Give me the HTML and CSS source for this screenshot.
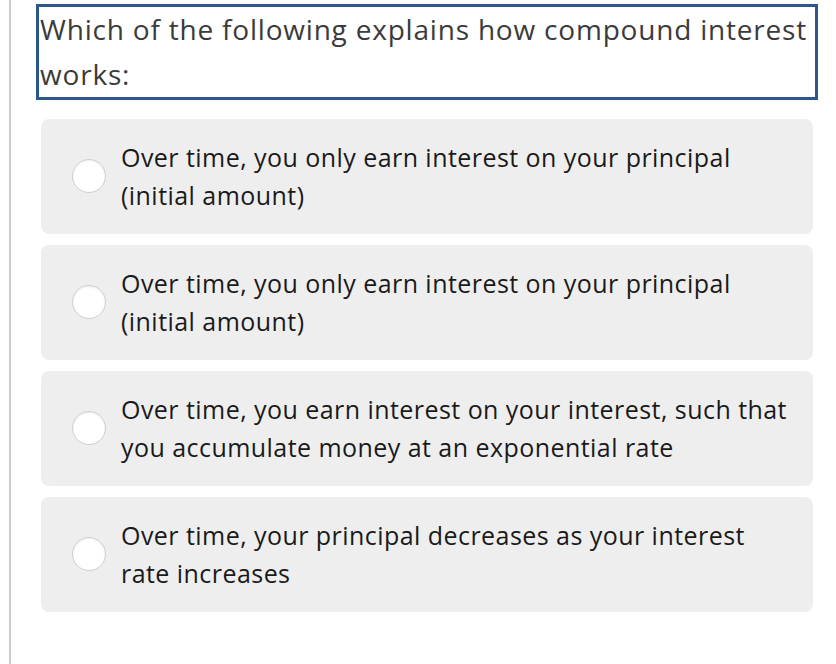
FILE: index.html
```html
<!DOCTYPE html>
<html lang="en">
<head>
    <meta charset="UTF-8">
    <meta name="viewport" content="width=device-width, initial-scale=1.0">
    <title>Quiz Question</title>
    <link rel="stylesheet" href="styles.css">
</head>
<body>
    <div class="wrapper">
        <div class="question">
            Which of the following explains how compound interest works:
        </div>
        <div class="answers">
            <label class="answer">
                <span class="radio"></span>
                <span class="answer-text">Over time, you only earn interest on your principal (initial amount)</span>
            </label>
            <label class="answer">
                <span class="radio"></span>
                <span class="answer-text">Over time, you only earn interest on your principal (initial amount)</span>
            </label>
            <label class="answer">
                <span class="radio"></span>
                <span class="answer-text">Over time, you earn interest on your interest, such that you accumulate money at an exponential rate</span>
            </label>
            <label class="answer">
                <span class="radio"></span>
                <span class="answer-text">Over time, your principal decreases as your interest rate increases</span>
            </label>
        </div>
    </div>
</body>
</html>
```
FILE: styles.css
```css
body {
    margin: 0;
    background-color: white;
    font-family: "Open Sans", Lato, sans-serif;
}

.wrapper {
    margin-left: 9px;
    min-height: 664px;
    border-left: 2px solid #cccccc;
    padding: 4px 18px 0 25px;
    box-sizing: border-box;
}

.question {
    border: 3px solid #2b5a8a;
    color: #3b3b3b;
    font-size: 28px;
    line-height: 45px;
    letter-spacing: 0.8px;
    padding: 0 4px 0 1px;
}

.answers {
    display: flex;
    flex-direction: column;
    gap: 11px;
    margin: 19px 5px 0;
}

.answer {
    display: flex;
    align-items: center;
    background-color: #eeeeee;
    border-radius: 8px;
    padding: 19px 20px 20px 31px;
    min-height: 76px;
}

.radio {
    flex: none;
    width: 32px;
    height: 32px;
    border: 1px solid #cfcfcf;
    border-radius: 50%;
    background-color: white;
    box-shadow: inset 0 1px 2px rgba(0, 0, 0, 0.08);
    margin-right: 15px;
}

.answer-text {
    color: #1a1a1a;
    font-size: 25px;
    line-height: 38px;
    letter-spacing: 0.45px;
}
```
